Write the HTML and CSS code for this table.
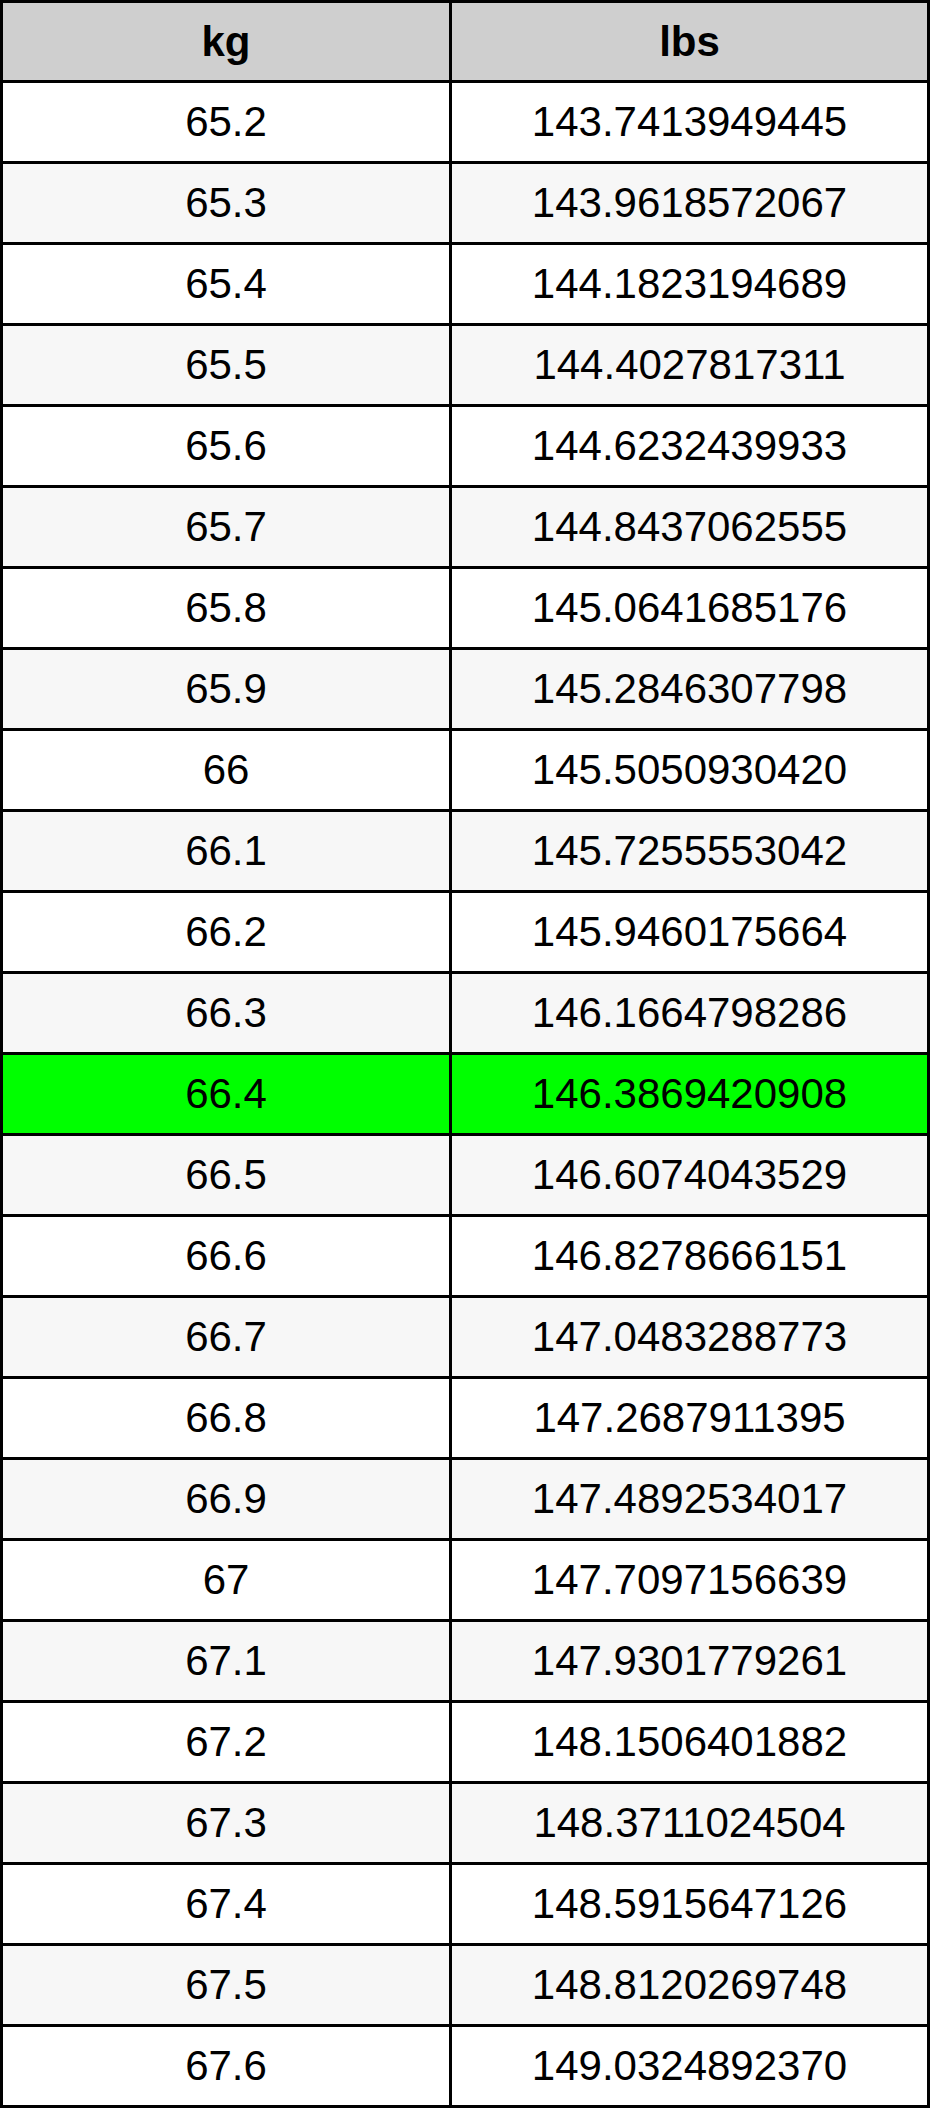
FILE: index.html
```html
<!DOCTYPE html>
<html>
<head>
<meta charset="utf-8">
<link rel="stylesheet" href="styles.css">
</head>
<body>
<table class="conv">
<colgroup><col class="c1"><col class="c2"></colgroup>
<thead>
<tr><th>kg</th><th>lbs</th></tr>
</thead>
<tbody>
<tr><td>65.2</td><td>143.7413949445</td></tr>
<tr class="alt"><td>65.3</td><td>143.9618572067</td></tr>
<tr><td>65.4</td><td>144.1823194689</td></tr>
<tr class="alt"><td>65.5</td><td>144.4027817311</td></tr>
<tr><td>65.6</td><td>144.6232439933</td></tr>
<tr class="alt"><td>65.7</td><td>144.8437062555</td></tr>
<tr><td>65.8</td><td>145.0641685176</td></tr>
<tr class="alt"><td>65.9</td><td>145.2846307798</td></tr>
<tr><td>66</td><td>145.5050930420</td></tr>
<tr class="alt"><td>66.1</td><td>145.7255553042</td></tr>
<tr><td>66.2</td><td>145.9460175664</td></tr>
<tr class="alt"><td>66.3</td><td>146.1664798286</td></tr>
<tr class="hl"><td>66.4</td><td>146.3869420908</td></tr>
<tr class="alt"><td>66.5</td><td>146.6074043529</td></tr>
<tr><td>66.6</td><td>146.8278666151</td></tr>
<tr class="alt"><td>66.7</td><td>147.0483288773</td></tr>
<tr><td>66.8</td><td>147.2687911395</td></tr>
<tr class="alt"><td>66.9</td><td>147.4892534017</td></tr>
<tr><td>67</td><td>147.7097156639</td></tr>
<tr class="alt"><td>67.1</td><td>147.9301779261</td></tr>
<tr><td>67.2</td><td>148.1506401882</td></tr>
<tr class="alt"><td>67.3</td><td>148.3711024504</td></tr>
<tr><td>67.4</td><td>148.5915647126</td></tr>
<tr class="alt"><td>67.5</td><td>148.8120269748</td></tr>
<tr><td>67.6</td><td>149.0324892370</td></tr>
</tbody>
</table>
</body>
</html>
```
FILE: styles.css
```css
html, body {
  margin: 0;
  padding: 0;
  background: #ffffff;
}
.conv {
  width: 930px;
  border-collapse: collapse;
  table-layout: fixed;
  font-family: "Liberation Sans", Arial, sans-serif;
  font-size: 42px;
  color: #000;
}
.c1 { width: 449px; }
.c2 { width: auto; }
.conv th, .conv td {
  border: 3px solid #000;
  padding: 0;
  text-align: center;
  vertical-align: middle;
  line-height: 1;
}
.conv th {
  background: #cfcfcf;
  font-weight: bold;
  height: 77px;
}
.conv td {
  height: 78px;
  background: #ffffff;
}
.conv tr.alt td { background: #f7f7f7; }
.conv tr.hl td { background: #00ff00; }
```
